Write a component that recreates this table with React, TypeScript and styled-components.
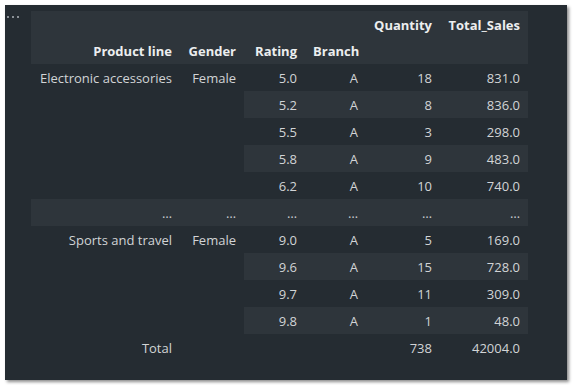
import styled, { createGlobalStyle } from 'styled-components';

const GlobalStyle = createGlobalStyle`
  body {
    margin: 0;
    background: #ffffff;
    font-family: "Open Sans", "Noto Sans", sans-serif;
  }
`;

const Page = styled.div`
  padding: 5px;
`;

const Panel = styled.div`
  display: flex;
  width: 562px;
  height: 375px;
  box-sizing: border-box;
  padding-top: 6px;
  background: #252c32;
  box-shadow: 2px 2px 3px rgba(0, 0, 0, 0.45);
`;

const Gutter = styled.div`
  width: 26px;
  flex-shrink: 0;
  display: flex;
  gap: 3px;
  padding: 5px 0 0 2px;
  box-sizing: border-box;
`;

const Dot = styled.span`
  width: 2px;
  height: 2px;
  background: #8a9096;
`;

const Table = styled.table`
  border-collapse: collapse;
  table-layout: fixed;
  width: 497px;
  font-size: 13px;
  color: #d2d4d6;
  height: fit-content;
`;

const Col = styled.col<{ $w: number }>`
  width: ${(p) => p.$w}px;
`;

const HeadRow = styled.tr<{ $h: number }>`
  height: ${(p) => p.$h}px;
  background: #2e353b;
`;

const BodyRow = styled.tr<{ $shaded?: boolean }>`
  height: 27px;
  background: ${(p) => (p.$shaded ? '#2e353b' : 'transparent')};
`;

const HeadCell = styled.th<{ $left?: boolean }>`
  padding: 0 8px;
  text-align: ${(p) => (p.$left ? 'left' : 'right')};
  font-weight: 700;
  color: #eceeef;
  white-space: nowrap;
`;

const IndexCell = styled.th`
  padding: 0 8px;
  height: 27px;
  text-align: right;
  vertical-align: top;
  line-height: 28px;
  font-weight: 400;
  white-space: nowrap;
  background: #252c32;
`;

const Cell = styled.td`
  padding: 0 8px;
  text-align: right;
  white-space: nowrap;
`;

const Ellipsis = styled.td`
  padding: 0 8px;
  text-align: right;
  color: #c8ccd0;
`;

type Row = { rating: string; qty: number; sales: string };

const groups: { line: string; gender: string; rows: Row[] }[] = [
  {
    line: 'Electronic accessories',
    gender: 'Female',
    rows: [
      { rating: '5.0', qty: 18, sales: '831.0' },
      { rating: '5.2', qty: 8, sales: '836.0' },
      { rating: '5.5', qty: 3, sales: '298.0' },
      { rating: '5.8', qty: 9, sales: '483.0' },
      { rating: '6.2', qty: 10, sales: '740.0' },
    ],
  },
  {
    line: 'Sports and travel',
    gender: 'Female',
    rows: [
      { rating: '9.0', qty: 5, sales: '169.0' },
      { rating: '9.6', qty: 15, sales: '728.0' },
      { rating: '9.7', qty: 11, sales: '309.0' },
      { rating: '9.8', qty: 1, sales: '48.0' },
    ],
  },
];

const widths = [149, 64, 61, 61, 74, 88];

export default function App() {
  let rowIndex = 0;
  const body: JSX.Element[] = [];

  groups.forEach((g, gi) => {
    if (gi === 1) {
      rowIndex += 1;
      body.push(
        <BodyRow key="ellipsis" $shaded={rowIndex % 2 === 0}>
          {widths.map((_, i) => (
            <Ellipsis key={i}>…</Ellipsis>
          ))}
        </BodyRow>
      );
    }
    g.rows.forEach((r, ri) => {
      rowIndex += 1;
      body.push(
        <BodyRow key={`${gi}-${ri}`} $shaded={rowIndex % 2 === 0}>
          {ri === 0 && (
            <>
              <IndexCell rowSpan={g.rows.length}>{g.line}</IndexCell>
              <IndexCell rowSpan={g.rows.length}>{g.gender}</IndexCell>
            </>
          )}
          <Cell>{r.rating}</Cell>
          <Cell>A</Cell>
          <Cell>{r.qty}</Cell>
          <Cell>{r.sales}</Cell>
        </BodyRow>
      );
    });
  });

  return (
    <>
      <GlobalStyle />
      <Page>
        <Panel>
          <Gutter>
            <Dot />
            <Dot />
            <Dot />
          </Gutter>
          <Table>
            <colgroup>
              {widths.map((w, i) => (
                <Col key={i} $w={w} />
              ))}
            </colgroup>
            <thead>
              <HeadRow $h={27}>
                <HeadCell />
                <HeadCell />
                <HeadCell />
                <HeadCell />
                <HeadCell>Quantity</HeadCell>
                <HeadCell>Total_Sales</HeadCell>
              </HeadRow>
              <HeadRow $h={26}>
                <HeadCell>Product line</HeadCell>
                <HeadCell>Gender</HeadCell>
                <HeadCell>Rating</HeadCell>
                <HeadCell $left>Branch</HeadCell>
                <HeadCell />
                <HeadCell />
              </HeadRow>
            </thead>
            <tbody>
              {body}
              <BodyRow>
                <IndexCell>Total</IndexCell>
                <Cell />
                <Cell />
                <Cell />
                <Cell>738</Cell>
                <Cell>42004.0</Cell>
              </BodyRow>
            </tbody>
          </Table>
        </Panel>
      </Page>
    </>
  );
}
